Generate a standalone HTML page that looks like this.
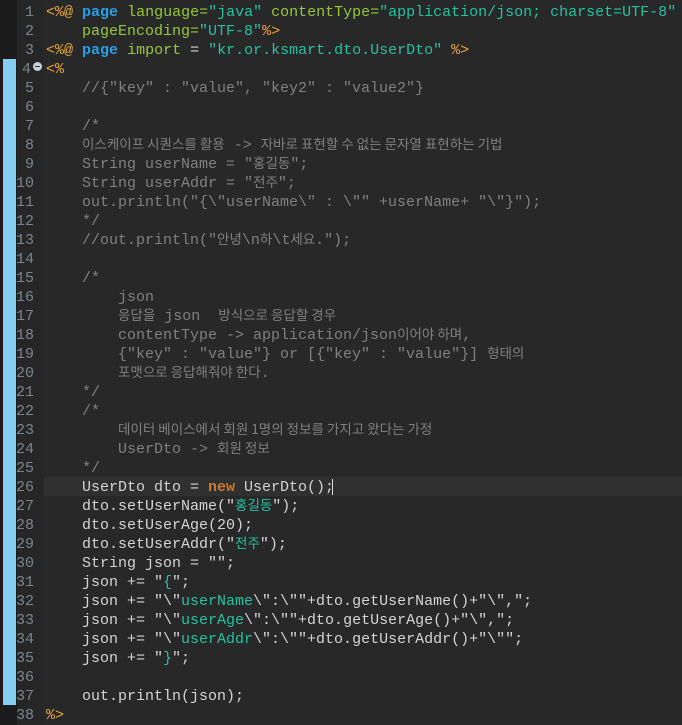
<!DOCTYPE html>
<html><head><meta charset="utf-8">
<style>
html,body{margin:0;padding:0}
body{width:682px;height:725px;background:#282828;position:relative;overflow:hidden;font-family:"Liberation Mono","Noto Sans CJK KR",monospace;font-size:15px;color:#d4d4d4}
.strip{position:absolute;left:0;top:0;width:17px;height:725px;background:#1c1c1c}
.bar{position:absolute;left:3px;top:59px;width:13px;height:646px;background:#86cdf2}
.gut{position:absolute;left:17px;top:0;width:26px;height:725px;background:#262626}
.hl{position:absolute;left:44px;top:477px;width:638px;height:19px;background:#303030}
.ln{position:absolute;left:0;width:34px;text-align:right;color:#7b8590;height:19px;line-height:19px;font-size:15px}
.c{position:absolute;left:46px;height:19px;line-height:19px;white-space:pre}
.k{font-family:"Noto Sans CJK KR","Liberation Sans",sans-serif;font-size:13.5px;line-height:0}
.cm{color:#808080}
.kw{color:#2a9fe6;font-weight:bold}
.at{color:#95c93c}
.st{color:#25c1a0}
.tg{color:#e9a53a}
.nw{color:#cc7a30;font-weight:bold}
.fold{position:absolute;left:33px;top:62px;width:9px;height:9px;border-radius:50%;background:#c9d3dc}
.fold:after{content:"";position:absolute;left:2px;top:4px;width:5px;height:1px;background:#333}
.cur{position:absolute;left:332px;top:479px;width:1px;height:16px;background:#ddd}
</style></head><body>
<div class="strip"></div><div class="bar"></div><div class="gut"></div><div class="hl"></div>
<div class="fold"></div><div class="cur"></div>

<div class="ln" style="top:3px">1</div><div class="ln" style="top:22px">2</div><div class="ln" style="top:41px">3</div><div class="ln" style="top:60px;width:31px">4</div><div class="ln" style="top:79px">5</div><div class="ln" style="top:98px">6</div><div class="ln" style="top:117px">7</div><div class="ln" style="top:136px">8</div><div class="ln" style="top:155px">9</div><div class="ln" style="top:174px">10</div><div class="ln" style="top:193px">11</div><div class="ln" style="top:212px">12</div><div class="ln" style="top:231px">13</div><div class="ln" style="top:250px">14</div><div class="ln" style="top:269px">15</div><div class="ln" style="top:288px">16</div><div class="ln" style="top:307px">17</div><div class="ln" style="top:326px">18</div><div class="ln" style="top:345px">19</div><div class="ln" style="top:364px">20</div><div class="ln" style="top:383px">21</div><div class="ln" style="top:402px">22</div><div class="ln" style="top:421px">23</div><div class="ln" style="top:440px">24</div><div class="ln" style="top:459px">25</div><div class="ln" style="top:478px">26</div><div class="ln" style="top:497px">27</div><div class="ln" style="top:516px">28</div><div class="ln" style="top:535px">29</div><div class="ln" style="top:554px">30</div><div class="ln" style="top:573px">31</div><div class="ln" style="top:592px">32</div><div class="ln" style="top:611px">33</div><div class="ln" style="top:630px">34</div><div class="ln" style="top:649px">35</div><div class="ln" style="top:668px">36</div><div class="ln" style="top:687px">37</div><div class="ln" style="top:706px">38</div>

<div class="c" style="top:3px"><span class="tg">&lt;%@</span> <span class="kw">page</span> <span class="at">language=</span><span class="st">"java"</span> <span class="at">contentType=</span><span class="st">"application/json; charset=UTF-8"</span></div>
<div class="c" style="top:22px">    <span class="at">pageEncoding=</span><span class="st">"UTF-8"</span><span class="tg">%&gt;</span></div>
<div class="c" style="top:41px"><span class="tg">&lt;%@</span> <span class="kw">page</span> <span class="at">import</span> = <span class="st">"kr.or.ksmart.dto.UserDto"</span> <span class="tg">%&gt;</span></div>
<div class="c" style="top:60px"><span class="tg">&lt;%</span></div>
<div class="c cm" style="top:79px">    //{"key" : "value", "key2" : "value2"}</div>
<div class="c cm" style="top:117px">    /*</div>
<div class="c cm" style="top:136px">    <span class="k">이스케이프 시퀀스를 활용</span> -&gt; <span class="k">자바로 표현할 수 없는 문자열 표현하는 기법</span></div>
<div class="c cm" style="top:155px">    String userName = "<span class="k">홍길동</span>";</div>
<div class="c cm" style="top:174px">    String userAddr = "<span class="k">전주</span>";</div>
<div class="c cm" style="top:193px">    out.println("{\"userName\" : \"" +userName+ "\"}");</div>
<div class="c cm" style="top:212px">    */</div>
<div class="c cm" style="top:231px">    //out.println("<span class="k">안녕</span>\n<span class="k">하</span>\t<span class="k">세요</span>.");</div>
<div class="c cm" style="top:269px">    /*</div>
<div class="c cm" style="top:288px">        json</div>
<div class="c cm" style="top:307px">        <span class="k">응답을</span> json  <span class="k">방식으로 응답할 경우</span></div>
<div class="c cm" style="top:326px">        contentType -&gt; application/json<span class="k">이어야 하며</span>,</div>
<div class="c cm" style="top:345px">        {"key" : "value"} or [{"key" : "value"}] <span class="k">형태의</span></div>
<div class="c cm" style="top:364px">        <span class="k">포맷으로 응답해줘야 한다</span>.</div>
<div class="c cm" style="top:383px">    */</div>
<div class="c cm" style="top:402px">    /*</div>
<div class="c cm" style="top:421px">        <span class="k">데이터 베이스에서 회원 1명의 정보를 가지고 왔다는 가정</span></div>
<div class="c cm" style="top:440px">        UserDto -&gt; <span class="k">회원 정보</span></div>
<div class="c cm" style="top:459px">    */</div>
<div class="c" style="top:478px">    UserDto dto = <span class="nw">new</span> UserDto();</div>
<div class="c" style="top:497px">    dto.setUserName("<span class="st k">홍길동</span>");</div>
<div class="c" style="top:516px">    dto.setUserAge(20);</div>
<div class="c" style="top:535px">    dto.setUserAddr("<span class="st k">전주</span>");</div>
<div class="c" style="top:554px">    String json = "";</div>
<div class="c" style="top:573px">    json += "<span class="st">{</span>";</div>
<div class="c" style="top:592px">    json += "\"<span class="st">userName</span>\":\""+dto.getUserName()+"\",";</div>
<div class="c" style="top:611px">    json += "\"<span class="st">userAge</span>\":\""+dto.getUserAge()+"\",";</div>
<div class="c" style="top:630px">    json += "\"<span class="st">userAddr</span>\":\""+dto.getUserAddr()+"\"";</div>
<div class="c" style="top:649px">    json += "<span class="st">}</span>";</div>
<div class="c" style="top:687px">    out.println(json);</div>
<div class="c" style="top:706px"><span class="tg">%&gt;</span></div>
</body></html>
